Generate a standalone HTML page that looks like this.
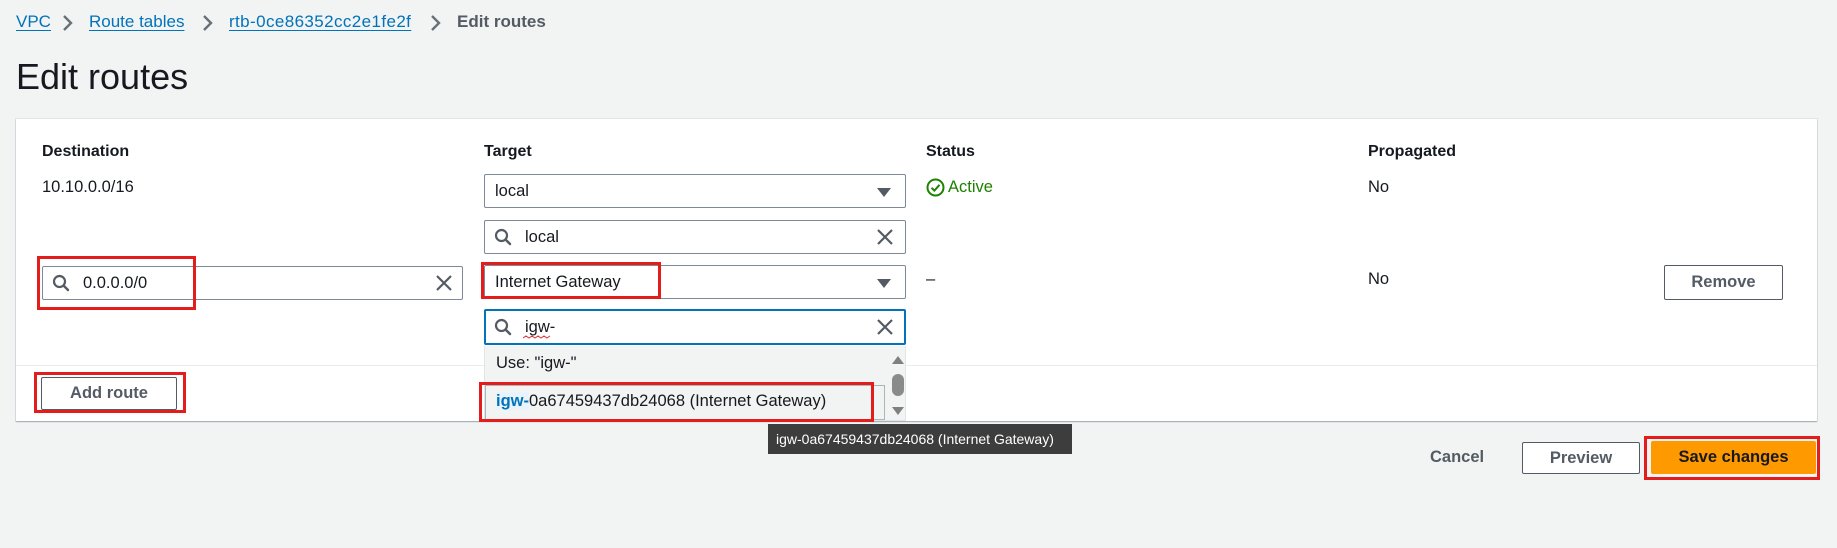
<!DOCTYPE html>
<html><head><meta charset="utf-8">
<style>
*{box-sizing:border-box;margin:0;padding:0}
body{width:1837px;height:548px;background:#f2f3f3;font-family:"Liberation Sans",Arial,sans-serif;position:relative;overflow:hidden;color:#16191f}
.a{position:absolute}
.bc{top:12px;font-size:17px;color:#0073bb;text-decoration:underline;text-underline-offset:3px;white-space:nowrap}
.panel{left:16px;top:119px;width:1801px;height:302px;background:#fff;box-shadow:0 1px 1px rgba(0,22,40,.3),0 0 0 1px #e1e4e8}
.h{font-weight:bold;font-size:16px;top:143px}
.box{border:1px solid #7d8998;border-radius:2px;background:#fff;height:34px;font-size:16.5px;line-height:32px}
.red{border:3px solid #e31c1c}
.tri{position:absolute;right:14px;top:13px;width:0;height:0;border-left:7px solid transparent;border-right:7px solid transparent;border-top:9px solid #545b64}
.btn{border:1px solid #545b64;border-radius:2px;background:#fff;font-weight:bold;font-size:16.5px;color:#545b64;text-align:center}
</style></head><body>
<div class="a bc" style="left:16px">VPC</div>
<svg class="a" style="left:62px;top:14px" width="12" height="18" viewBox="0 0 12 18"><path d="M2 2L9 9L2 16" fill="none" stroke="#687078" stroke-width="2.4"/></svg>
<div class="a bc" style="left:89px">Route tables</div>
<svg class="a" style="left:202px;top:14px" width="12" height="18" viewBox="0 0 12 18"><path d="M2 2L9 9L2 16" fill="none" stroke="#687078" stroke-width="2.4"/></svg>
<div class="a bc" style="left:229px;letter-spacing:0.4px">rtb-0ce86352cc2e1fe2f</div>
<svg class="a" style="left:430px;top:14px" width="12" height="18" viewBox="0 0 12 18"><path d="M2 2L9 9L2 16" fill="none" stroke="#687078" stroke-width="2.4"/></svg>
<div class="a" style="left:457px;top:12px;font-size:17px;font-weight:bold;color:#545b64">Edit routes</div>
<div class="a" style="left:16px;top:56px;font-size:36px;color:#16191f">Edit routes</div>

<div class="a panel"></div>
<div class="a" style="left:16px;top:365px;width:1801px;height:1px;background:#eaeded"></div>

<div class="a h" style="left:42px">Destination</div>
<div class="a h" style="left:484px">Target</div>
<div class="a h" style="left:926px">Status</div>
<div class="a h" style="left:1368px">Propagated</div>

<div class="a" style="left:42px;top:178px;font-size:16.5px">10.10.0.0/16</div>

<div class="a box" style="left:484px;top:174px;width:422px;padding-left:10px">local<span class="tri"></span></div>
<div class="a box" style="left:484px;top:220px;width:422px;padding-left:40px">local</div>
<svg class="a" style="left:494px;top:228px" width="18" height="18" viewBox="0 0 18 18"><circle cx="7.5" cy="7.5" r="5.5" fill="none" stroke="#545b64" stroke-width="2.2"/><path d="M11.5 11.5L16 16" stroke="#545b64" stroke-width="2.4" stroke-linecap="round"/></svg>
<svg class="a" style="left:876px;top:228px" width="18" height="18" viewBox="0 0 18 18"><path d="M2 2L16 16M16 2L2 16" stroke="#545b64" stroke-width="2.2"/></svg>

<div class="a" style="left:926px;top:178px;font-size:16.5px;color:#1d8102;padding-left:22px">Active</div>
<svg class="a" style="left:926px;top:178px" width="19" height="19" viewBox="0 0 19 19"><circle cx="9.5" cy="9.5" r="8" fill="none" stroke="#1d8102" stroke-width="2"/><path d="M5.5 9.8L8.4 12.6L13.5 6.8" fill="none" stroke="#1d8102" stroke-width="2"/></svg>
<div class="a" style="left:1368px;top:178px;font-size:16.5px">No</div>

<div class="a box" style="left:42px;top:266px;width:421px;padding-left:40px">0.0.0.0/0</div>
<svg class="a" style="left:52px;top:274px" width="18" height="18" viewBox="0 0 18 18"><circle cx="7.5" cy="7.5" r="5.5" fill="none" stroke="#545b64" stroke-width="2.2"/><path d="M11.5 11.5L16 16" stroke="#545b64" stroke-width="2.4" stroke-linecap="round"/></svg>
<svg class="a" style="left:435px;top:274px" width="18" height="18" viewBox="0 0 18 18"><path d="M2 2L16 16M16 2L2 16" stroke="#545b64" stroke-width="2.2"/></svg>
<div class="a red" style="left:37px;top:256px;width:159px;height:54px"></div>

<div class="a box" style="left:484px;top:265px;width:422px;padding-left:10px">Internet Gateway<span class="tri"></span></div>
<div class="a red" style="left:481px;top:262px;width:180px;height:37px"></div>

<div class="a" style="left:926px;top:270px;font-size:16.5px">–</div>
<div class="a" style="left:1368px;top:270px;font-size:16.5px">No</div>
<div class="a btn" style="left:1664px;top:265px;width:119px;height:35px;line-height:33px">Remove</div>

<div class="a box" style="left:484px;top:309px;width:422px;height:36px;border:2px solid #0073bb;padding-left:39px">igw-</div>
<svg class="a" style="left:494px;top:318px" width="18" height="18" viewBox="0 0 18 18"><circle cx="7.5" cy="7.5" r="5.5" fill="none" stroke="#545b64" stroke-width="2.2"/><path d="M11.5 11.5L16 16" stroke="#545b64" stroke-width="2.4" stroke-linecap="round"/></svg>
<svg class="a" style="left:876px;top:318px" width="18" height="18" viewBox="0 0 18 18"><path d="M2 2L16 16M16 2L2 16" stroke="#545b64" stroke-width="2.2"/></svg>
<svg class="a" style="left:523px;top:335px" width="28" height="5" viewBox="0 0 28 5"><path d="M0 3L3 1L6 3L9 1L12 3L15 1L18 3L21 1L24 3L27 1" fill="none" stroke="#d33" stroke-width="1"/></svg>

<div class="a" style="left:484px;top:346px;width:422px;height:75px;background:#f2f3f3;border:1px solid #e1e4e8;border-top:none"></div>
<div class="a" style="left:496px;top:354px;font-size:16.5px">Use: "igw-"</div>
<div class="a" style="left:485px;top:385px;width:400px;height:35px;background:#f2f3f3;border:1px solid #aab7b8"></div>
<div class="a" style="left:496px;top:392px;font-size:16.5px;white-space:nowrap"><span style="color:#0073bb;font-weight:bold;background:#eaf3fb">igw-</span>0a67459437db24068 (Internet Gateway)</div>
<div class="a red" style="left:479px;top:382px;width:395px;height:40px"></div>
<div class="a" style="left:892px;top:356px;width:0;height:0;border-left:6px solid transparent;border-right:6px solid transparent;border-bottom:8px solid #7f7f7f"></div>
<div class="a" style="left:892px;top:374px;width:12px;height:22px;background:#8a8a8a;border-radius:6px"></div>
<div class="a" style="left:892px;top:407px;width:0;height:0;border-left:6px solid transparent;border-right:6px solid transparent;border-top:8px solid #7f7f7f"></div>

<div class="a" style="left:768px;top:424px;width:304px;height:30px;background:#3d3d3d;color:#fff;font-size:14px;line-height:30px;padding-left:8px;white-space:nowrap">igw-0a67459437db24068 (Internet Gateway)</div>

<div class="a btn" style="left:41px;top:377px;width:136px;height:33px;line-height:31px">Add route</div>
<div class="a red" style="left:34px;top:372px;width:152px;height:41px"></div>

<div class="a" style="left:1430px;top:448px;font-size:16.5px;font-weight:bold;color:#545b64">Cancel</div>
<div class="a btn" style="left:1522px;top:442px;width:118px;height:32px;line-height:30px">Preview</div>
<div class="a" style="left:1651px;top:441px;width:165px;height:33px;background:#ff9900;border-radius:2px;font-weight:bold;font-size:16.5px;line-height:33px;text-align:center;color:#16191f">Save changes</div>
<div class="a red" style="left:1644px;top:436px;width:176px;height:44px"></div>
</body></html>
